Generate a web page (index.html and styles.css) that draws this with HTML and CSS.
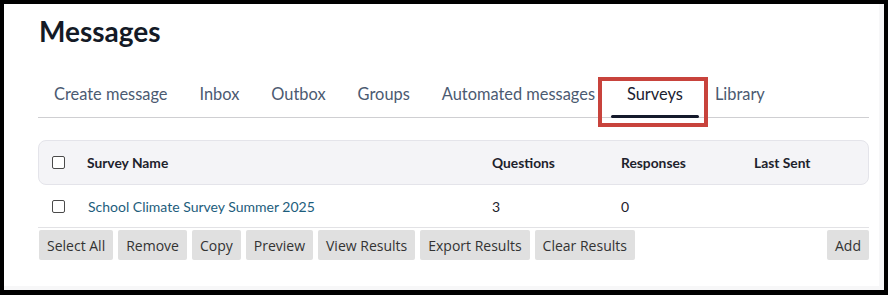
FILE: index.html
```html
<!DOCTYPE html>
<html>
<head>
<meta charset="utf-8">
<link rel="stylesheet" href="styles.css">
</head>
<body>
<div class="frame">
  <div class="page">
    <h1 class="title">Messages</h1>
    <nav class="tabs">
      <a class="tab">Create message</a>
      <a class="tab">Inbox</a>
      <a class="tab">Outbox</a>
      <a class="tab">Groups</a>
      <a class="tab">Automated messages</a>
      <a class="tab active">Surveys<span class="highlight"></span></a>
      <a class="tab">Library</a>
    </nav>
    <div class="table">
      <div class="thead">
        <span class="cell cb"><span class="box"></span></span>
        <span class="cell">Survey Name</span>
        <span class="cell">Questions</span>
        <span class="cell">Responses</span>
        <span class="cell">Last Sent</span>
      </div>
      <div class="trow">
        <span class="cell cb"><span class="box"></span></span>
        <span class="cell"><a class="link">School Climate Survey Summer 2025</a></span>
        <span class="cell">3</span>
        <span class="cell">0</span>
        <span class="cell"></span>
      </div>
    </div>
    <div class="actions">
      <div class="group">
        <button class="btn">Select All</button>
        <button class="btn">Remove</button>
        <button class="btn">Copy</button>
        <button class="btn">Preview</button>
        <button class="btn">View Results</button>
        <button class="btn">Export Results</button>
        <button class="btn">Clear Results</button>
      </div>
      <button class="btn">Add</button>
    </div>
  </div>
</div>
</body>
</html>
```

FILE: styles.css
```css
html, body {
  margin: 0;
  padding: 0;
  background: #000;
}
.frame {
  width: 888px;
  height: 295px;
  box-sizing: border-box;
  padding: 4px 4px 5px 4px;
}
.page {
  background: #fff;
  height: 286px;
  box-sizing: border-box;
  padding: 0 15px 0 34px;
  box-shadow: inset -5px -4px 0 #f7f7f8;
  font-family: "Lato", "Open Sans", sans-serif;
}
.title {
  margin: 0;
  padding-top: 10px;
  padding-left: 1px;
  font-size: 28px;
  line-height: 34px;
  font-weight: 700;
  color: #141a26;
}
.tabs {
  display: flex;
  margin-top: 36px;
  border-bottom: 1px solid #cfcfd2;
}
.tab {
  position: relative;
  padding: 0 16px 13px 16px;
  font-size: 16.4px;
  line-height: 20px;
  color: #4b5a71;
}
.tab.active {
  color: #1a2130;
}
.tab.active::after {
  content: "";
  position: absolute;
  left: 0;
  right: 0;
  bottom: -1px;
  height: 3px;
  border-radius: 2px;
  background: #141a2b;
}
.highlight {
  position: absolute;
  left: -13px;
  right: -9px;
  top: -7px;
  bottom: -10px;
  border: 4px solid #c8433c;
}
.table {
  margin-top: 22px;
}
.thead, .trow {
  display: grid;
  grid-template-columns: 35px 405px 129px 133px 1fr;
  align-items: center;
  padding-left: 14px;
}
.thead {
  height: 45px;
  box-sizing: border-box;
  background: #f4f4f7;
  border: 1px solid #e4e4ea;
  border-radius: 8px;
  padding-left: 13px;
  font-weight: 700;
  font-size: 13.8px;
  color: #1d222c;
}
.trow {
  height: 42px;
  border-bottom: 1px solid #e2e2e5;
  font-size: 14px;
  color: #1d222c;
}
.trow .cell:nth-child(2) {
  padding-left: 1px;
}
.box {
  display: block;
  width: 11px;
  height: 11px;
  border: 1px solid #4a4a4a;
  border-radius: 2px;
  background: #fff;
}
.link {
  color: #1d5d7c;
}
.actions {
  display: flex;
  justify-content: space-between;
  margin-top: 2px;
  padding-left: 1px;
}
.group {
  display: flex;
  gap: 5px;
}
.btn {
  font-family: "Open Sans", sans-serif;
  font-size: 14px;
  height: 30px;
  padding: 0 8px;
  border: none;
  border-radius: 2px;
  background: #e0e0e0;
  color: #333;
}
```
